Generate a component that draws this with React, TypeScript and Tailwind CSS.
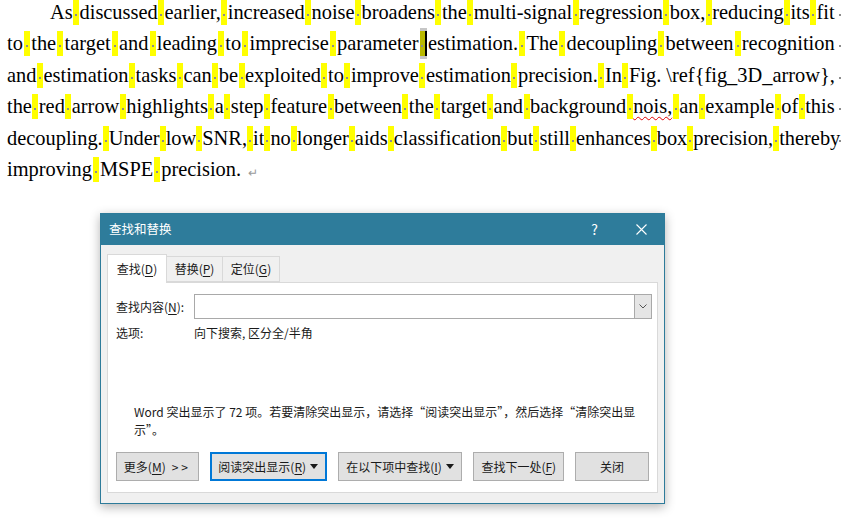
import React from 'react';

type Line = { text: string; indent?: boolean; last?: boolean };

// "|" = highlighted space, "^" = current match (caret), plain spaces stay inside a word
const lines: Line[] = [
  { indent: true, text: 'As|discussed|earlier,|increased|noise|broadens|the|multi-signal|regression|box,|reducing|its|fit' },
  { text: 'to|the|target|and|leading|to|imprecise|parameter^estimation.|The|decoupling|between|recognition' },
  { text: 'and|estimation|tasks|can|be|exploited|to|improve|estimation|precision.|In|Fig. \\ref{fig_3D_arrow},' },
  { text: 'the|red|arrow|highlights|a|step|feature|between|the|target|and|background|nois,|an|example|of|this' },
  { text: 'decoupling.|Under|low|SNR,|it|no|longer|aids|classification|but|still|enhances|box|precision,|thereby' },
  { text: 'improving|MSPE|precision.', last: true },
];

function Mark() {
  return (
    <span className="flex h-[25px] w-[6px] shrink-0 justify-center bg-[#ffff00] pt-[14px]">
      <span className="h-[2px] w-[2px] bg-[#8c8c8c]" />
    </span>
  );
}

function Caret() {
  return (
    <span className="flex h-[25px] w-[7px] shrink-0 justify-center border-r-2 border-black bg-[#b9b900] pt-[14px] shadow-[0_-3px_0_#c6c6c6,0_3px_0_#c6c6c6]">
      <span className="h-[2px] w-[2px] bg-[#8c8c8c]" />
    </span>
  );
}

function TextLine({ line }: { line: Line }) {
  const parts = line.text.split(/([|^])/);
  const items = parts.map((p, i) => {
    if (p === '|') return <Mark key={i} />;
    if (p === '^') return <Caret key={i} />;
    if (p === 'nois,')
      return (
        <span key={i} className="shrink-0 whitespace-nowrap underline decoration-[#e00000] decoration-wavy decoration-1 underline-offset-[3px]">
          {p}
        </span>
      );
    return (
      <span key={i} className="shrink-0 whitespace-nowrap">
        {p}
      </span>
    );
  });

  if (line.last) {
    return (
      <div className="flex h-[31.4px] items-start gap-[1px] pl-[7px]">
        {items}
        <span className="ml-[6px] pt-[4px] text-[12px] leading-[25px] text-[#9a9a9a]">↵</span>
      </div>
    );
  }

  return (
    <div className={`flex h-[31.4px] items-start ${line.indent ? 'pl-[50px]' : 'pl-[7px]'}`}>
      <div className="flex w-0 flex-1 justify-between">{items}</div>
      <span className="flex w-[10px] justify-center pt-[14px]">
        <span className="h-[2px] w-[2px] bg-[#8c8c8c]" />
      </span>
    </div>
  );
}

function Key({ k }: { k: string }) {
  return <span className="underline underline-offset-2">{k}</span>;
}

function DropArrow() {
  return (
    <svg width="8" height="5" viewBox="0 0 8 5" className="ml-[4px]">
      <path d="M0 0H8L4 5Z" fill="#1a1a1a" />
    </svg>
  );
}

function Btn({ w, focused, children }: { w: string; focused?: boolean; children: React.ReactNode }) {
  return (
    <div
      className={`flex h-[29px] items-center justify-center bg-[#e1e1e1] ${w} ${
        focused ? 'border-2 border-[#0078d7]' : 'border border-[#adadad]'
      }`}
    >
      {children}
    </div>
  );
}

function FindDialog() {
  return (
    <div className="absolute left-[100px] top-[213px] flex h-[291px] w-[565px] flex-col border border-[#2d7b9a] bg-[#f0f0f0] font-['Noto_Sans_CJK_SC',sans-serif] text-[12px] text-[#1a1a1a] shadow-[0_3px_10px_rgba(0,0,0,0.3)]">
      <div className="flex h-[31px] shrink-0 items-center bg-[#2e7c9b] pl-[8px] text-white">
        <span className="text-[12.5px]">查找和替换</span>
        <span className="ml-auto mr-[38px] text-[14px]">?</span>
        <svg width="11" height="11" viewBox="0 0 11 11" className="mr-[17px]">
          <path d="M0.5 0.5L10.5 10.5M10.5 0.5L0.5 10.5" stroke="white" strokeWidth="1.1" />
        </svg>
      </div>

      <div className="flex flex-1 flex-col px-[6px] pb-[10px] pt-[9px]">
        <div className="flex h-[28px] items-end">
          <div className="relative z-10 -mb-px flex h-[29px] w-[60px] items-center justify-center border border-b-0 border-[#d9d9d9] bg-white">
            查找(<Key k="D" />)
          </div>
          <div className="flex h-[26px] w-[56px] items-center justify-center border border-l-0 border-[#d9d9d9] bg-[#f0f0f0]">
            替换(<Key k="P" />)
          </div>
          <div className="flex h-[26px] w-[57px] items-center justify-center border border-l-0 border-[#d9d9d9] bg-[#f0f0f0]">
            定位(<Key k="G" />)
          </div>
        </div>

        <div className="flex flex-1 flex-col border border-[#d9d9d9] bg-white pb-[11px] pl-[8px] pr-[5px] pt-[11px]">
          <div className="flex h-[25px] items-center">
            <span className="w-[78px]">
              查找内容(<Key k="N" />):
            </span>
            <div className="flex h-[25px] flex-1 items-stretch border border-[#a9a9a9] bg-white">
              <div className="flex-1" />
              <div className="flex w-[17px] items-center justify-center border-l border-[#a9a9a9] bg-[#e5e5e5]">
                <svg width="8" height="5" viewBox="0 0 8 5">
                  <path d="M0.5 0.5L4 4L7.5 0.5" fill="none" stroke="#555" strokeWidth="1" />
                </svg>
              </div>
            </div>
          </div>

          <div className="mt-[6px] flex h-[16px] items-center">
            <span className="w-[78px]">选项:</span>
            <span>向下搜索, 区分全/半角</span>
          </div>

          <div className="flex-1" />

          <p className="mb-[13px] ml-[18px] leading-[18px]">
            Word 突出显示了 72 项。若要清除突出显示，请选择“阅读突出显示”，然后选择“清除突出显
            <br />
            示”。
          </p>

          <div className="flex items-center gap-[11px] pr-[3px]">
            <Btn w="w-[83px]">
              更多(<Key k="M" />) <span className="ml-[6px] tracking-[3px]">&gt;&gt;</span>
            </Btn>
            <Btn w="w-[117px]" focused>
              阅读突出显示(<Key k="R" />)
              <DropArrow />
            </Btn>
            <Btn w="w-[125px]">
              在以下项中查找(<Key k="I" />)
              <DropArrow />
            </Btn>
            <Btn w="w-[91px]">
              查找下一处(<Key k="F" />)
            </Btn>
            <Btn w="w-[74px]">关闭</Btn>
          </div>
        </div>
      </div>
    </div>
  );
}

export default function App() {
  return (
    <div className="relative h-[521px] w-[853px] overflow-hidden bg-white">
      <div className="w-[845px] font-['Liberation_Serif',serif] text-[20.4px] leading-[25px] text-black">
        {lines.map((l, i) => (
          <TextLine key={i} line={l} />
        ))}
      </div>
      <FindDialog />
    </div>
  );
}
